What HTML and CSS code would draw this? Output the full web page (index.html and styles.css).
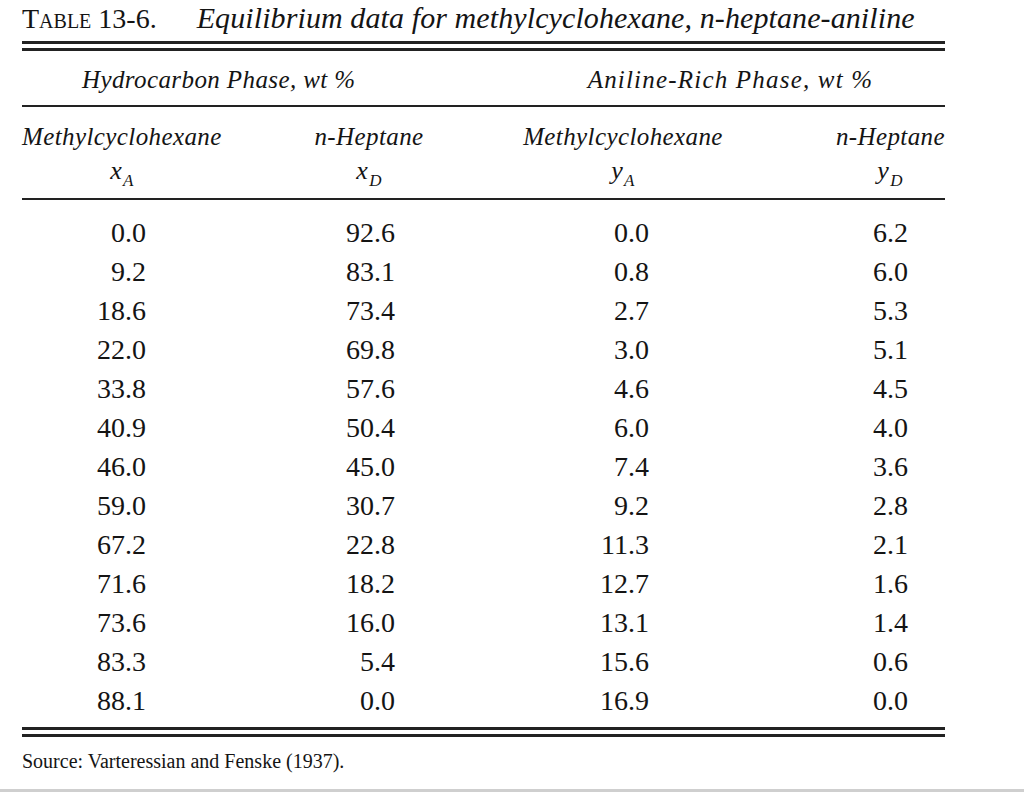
FILE: index.html
```html
<!DOCTYPE html>
<html lang="en">
<head>
  <meta charset="UTF-8">
  <meta name="viewport" content="width=device-width, initial-scale=1.0">
  <title>Table 13-6. Equilibrium data for methylcyclohexane, n-heptane-aniline</title>
  <link rel="stylesheet" href="styles.css">
</head>
<body>
  <div class="page">
    <h1 class="caption">
      <span class="label">Table 13-6.</span>
      <span class="title">Equilibrium data for methylcyclohexane, n-heptane-aniline</span>
    </h1>
    <div class="double-rule"></div>

    <table class="data-table">
      <colgroup>
        <col class="col-1">
        <col class="col-2">
        <col class="col-3">
        <col class="col-4">
      </colgroup>
      <thead>
        <tr class="group-row">
          <th colspan="2" class="group-left">Hydrocarbon Phase, wt %</th>
          <th colspan="2" class="group-right">Aniline-Rich Phase, wt %</th>
        </tr>
        <tr class="name-row">
          <th>Methylcyclohexane</th>
          <th>n-Heptane</th>
          <th>Methylcyclohexane</th>
          <th>n-Heptane</th>
        </tr>
        <tr class="symbol-row">
          <th>x<sub>A</sub></th>
          <th>x<sub>D</sub></th>
          <th>y<sub>A</sub></th>
          <th>y<sub>D</sub></th>
        </tr>
      </thead>
      <tbody>
        <tr><td>0.0</td><td>92.6</td><td>0.0</td><td>6.2</td></tr>
        <tr><td>9.2</td><td>83.1</td><td>0.8</td><td>6.0</td></tr>
        <tr><td>18.6</td><td>73.4</td><td>2.7</td><td>5.3</td></tr>
        <tr><td>22.0</td><td>69.8</td><td>3.0</td><td>5.1</td></tr>
        <tr><td>33.8</td><td>57.6</td><td>4.6</td><td>4.5</td></tr>
        <tr><td>40.9</td><td>50.4</td><td>6.0</td><td>4.0</td></tr>
        <tr><td>46.0</td><td>45.0</td><td>7.4</td><td>3.6</td></tr>
        <tr><td>59.0</td><td>30.7</td><td>9.2</td><td>2.8</td></tr>
        <tr><td>67.2</td><td>22.8</td><td>11.3</td><td>2.1</td></tr>
        <tr><td>71.6</td><td>18.2</td><td>12.7</td><td>1.6</td></tr>
        <tr><td>73.6</td><td>16.0</td><td>13.1</td><td>1.4</td></tr>
        <tr><td>83.3</td><td>5.4</td><td>15.6</td><td>0.6</td></tr>
        <tr><td>88.1</td><td>0.0</td><td>16.9</td><td>0.0</td></tr>
      </tbody>
    </table>

    <div class="double-rule bottom"></div>
    <p class="source">Source: Varteressian and Fenske (1937).</p>
  </div>
  <div class="scan-edge"></div>
</body>
</html>
```

FILE: styles.css
```css
body {
  margin: 0;
  background: #fff;
  color: #141414;
  font-family: "Liberation Serif", "Times New Roman", serif;
}
.page {
  width: 923px;
  padding: 0 79px 0 22px;
}
.caption {
  display: flex;
  align-items: baseline;
  gap: 40px;
  margin: 0;
  padding-top: 1px;
  font-weight: normal;
  font-size: 30px;
  line-height: 34px;
}
.label {
  font-variant: small-caps;
  font-size: 28px;
}
.title {
  font-style: italic;
  letter-spacing: 0.1px;
}
.double-rule {
  margin-top: 5px;
  height: 4px;
  border-top: 3px solid #222;
  border-bottom: 3px solid #222;
}
.double-rule.bottom {
  margin-top: 7px;
}

.data-table {
  width: 923px;
  border-collapse: collapse;
  table-layout: fixed;
  font-size: 25px;
}
.col-1 { width: 200px; }
.col-2 { width: 294px; }
.col-3 { width: 214px; }
.col-4 { width: 215px; }
.data-table th,
.data-table td {
  padding: 0;
  font-weight: normal;
}
.data-table th {
  font-style: italic;
  letter-spacing: 0.4px;
}

.group-row th {
  line-height: 40px;
  padding-top: 9px;
  padding-bottom: 5px;
  border-bottom: 2px solid #222;
}
.group-left {
  text-align: left;
  padding-left: 60px !important;
}
.group-right {
  text-align: center;
  letter-spacing: 1.2px !important;
}

.name-row th {
  line-height: 34px;
  padding-top: 13px;
  text-align: center;
}
.name-row th:first-child { text-align: left; }
.name-row th:last-child { text-align: right; }

.symbol-row th {
  line-height: 34px;
  padding-bottom: 10px;
  border-bottom: 2px solid #222;
  text-align: center;
  font-size: 26px;
}
.symbol-row th:last-child {
  text-align: right;
  padding-right: 42px;
}
.symbol-row sub {
  font-size: 17px;
  vertical-align: -7px;
  line-height: 0;
  margin-left: 1px;
}

.data-table td {
  font-size: 28px;
  line-height: 39px;
  text-align: right;
}
.data-table tbody tr:first-child td {
  padding-top: 13px;
}
.data-table td:nth-child(1) { padding-right: 76px; }
.data-table td:nth-child(2) { padding-right: 121px; }
.data-table td:nth-child(3) { padding-right: 81px; }
.data-table td:nth-child(4) { padding-right: 37px; }

.source {
  margin: 12px 0 0;
  font-size: 20px;
  line-height: 24px;
}
.scan-edge {
  margin-top: 16px;
  height: 3px;
  background: #cfcfcf;
}
```
